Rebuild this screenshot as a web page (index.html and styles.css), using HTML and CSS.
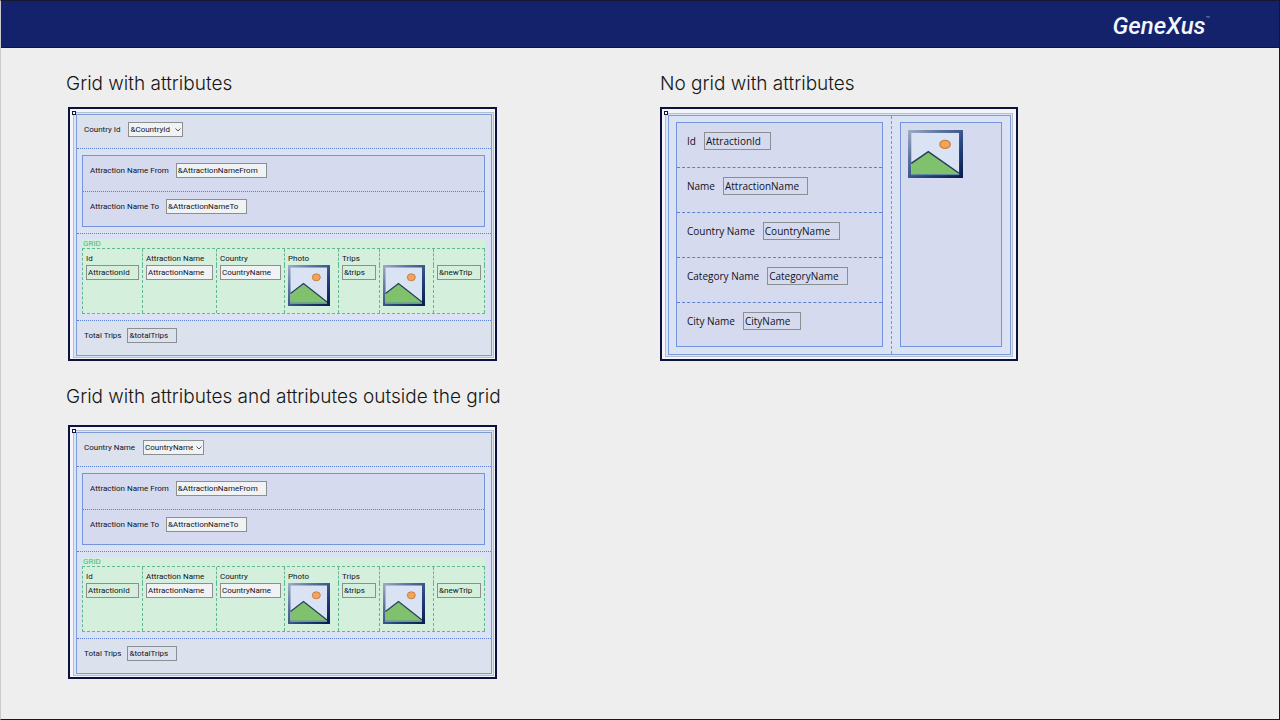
FILE: index.html
```html
<!DOCTYPE html>
<html lang="en">
<head>
<meta charset="utf-8">
<title>GeneXus grids</title>
<link rel="stylesheet" href="styles.css">
</head>
<body>
<svg class="defs" width="0" height="0" aria-hidden="true">
  <defs>
    <linearGradient id="frame" x1="0" y1="0" x2="1" y2="1">
      <stop offset="0" stop-color="#a3aec6"/>
      <stop offset=".3" stop-color="#5b739f"/>
      <stop offset=".65" stop-color="#24427c"/>
      <stop offset="1" stop-color="#081a4c"/>
    </linearGradient>
    <symbol id="photo" viewBox="0 0 42 41" preserveAspectRatio="none">
      <rect width="42" height="41" fill="url(#frame)"/>
      <rect x="2.5" y="2.5" width="36.500" height="36" fill="#d9e3f4"/>
      <path d="M2.500 28.500 15.500 18.500 39 37v1.500H2.500Z" fill="#80c16e"/>
      <path d="M2.500 28.500 15.500 18.500 39 37" fill="none" stroke="#263f5c" stroke-width="1.200"/>
      <path d="M2.500 38H39" stroke="#5d8c9c"/>
      <ellipse cx="28.300" cy="12.300" rx="4" ry="3.500" fill="#f3a45c" stroke="#c9813f"/>
    </symbol>
    <symbol id="chevron" viewBox="0 0 6 4">
      <path d="M.5.5 3 3 5.500.5" fill="none" stroke="#555"/>
    </symbol>
  </defs>
</svg>

<header class="topbar">
  <div class="logo">GeneXus<span class="tm">™</span></div>
</header>

<main class="board">
  <div class="column">
    <section class="sample">
      <h2 class="title">Grid with attributes</h2>
      <div class="panel">
        <span class="handle"></span>
        <div class="frame"><div class="canvas">
          <div class="row row-first">
            <label for="country-id">Country Id</label>
            <span class="combo combo-id"><select id="country-id"><option>&amp;CountryId</option></select><svg class="chevron"><use href="#chevron"/></svg></span>
          </div>
          <div class="row row-group">
            <div class="group">
              <div class="row filter"><label for="from-1">Attraction Name From</label><input class="field light w-91" id="from-1" value="&amp;AttractionNameFrom"></div>
              <div class="row filter"><label for="to-1">Attraction Name To</label><input class="field light w-81" id="to-1" value="&amp;AttractionNameTo"></div>
            </div>
          </div>
          <div class="row row-grid">
            <div class="grid-box">
              <div class="grid-label">GRID</div>
              <table class="grid">
                <colgroup><col class="c-id"><col class="c-name"><col class="c-country"><col class="c-photo"><col class="c-trips"><col class="c-photo"><col></colgroup>
                <thead><tr><th>Id</th><th>Attraction Name</th><th>Country</th><th>Photo</th><th>Trips</th><th></th><th></th></tr></thead>
                <tbody><tr>
                  <td><input class="field" aria-label="Id" value="AttractionId"></td>
                  <td><input class="field light" aria-label="Attraction Name" value="AttractionName"></td>
                  <td><input class="field light" aria-label="Country" value="CountryName"></td>
                  <td><svg class="photo"><use href="#photo"/></svg></td>
                  <td><input class="field" aria-label="Trips" value="&amp;trips"></td>
                  <td><svg class="photo"><use href="#photo"/></svg></td>
                  <td><input class="field" aria-label="New trip" value="&amp;newTrip"></td>
                </tr></tbody>
              </table>
            </div>
          </div>
          <div class="row row-last"><label for="total-1">Total Trips</label><input class="field w-50" id="total-1" value="&amp;totalTrips"></div>
        </div></div>
      </div>
    </section>

    <section class="sample sample-outside">
      <h2 class="title">Grid with attributes and attributes outside the grid</h2>
      <div class="panel">
        <span class="handle"></span>
        <div class="frame"><div class="canvas">
          <div class="row row-first">
            <label for="country-name">Country Name</label>
            <span class="combo combo-name"><select id="country-name"><option>CountryName</option></select><svg class="chevron"><use href="#chevron"/></svg></span>
          </div>
          <div class="row row-group">
            <div class="group">
              <div class="row filter"><label for="from-2">Attraction Name From</label><input class="field light w-91" id="from-2" value="&amp;AttractionNameFrom"></div>
              <div class="row filter"><label for="to-2">Attraction Name To</label><input class="field light w-81" id="to-2" value="&amp;AttractionNameTo"></div>
            </div>
          </div>
          <div class="row row-grid">
            <div class="grid-box">
              <div class="grid-label">GRID</div>
              <table class="grid">
                <colgroup><col class="c-id"><col class="c-name"><col class="c-country"><col class="c-photo"><col class="c-trips"><col class="c-photo"><col></colgroup>
                <thead><tr><th>Id</th><th>Attraction Name</th><th>Country</th><th>Photo</th><th>Trips</th><th></th><th></th></tr></thead>
                <tbody><tr>
                  <td><input class="field" aria-label="Id" value="AttractionId"></td>
                  <td><input class="field light" aria-label="Attraction Name" value="AttractionName"></td>
                  <td><input class="field light" aria-label="Country" value="CountryName"></td>
                  <td><svg class="photo"><use href="#photo"/></svg></td>
                  <td><input class="field" aria-label="Trips" value="&amp;trips"></td>
                  <td><svg class="photo"><use href="#photo"/></svg></td>
                  <td><input class="field" aria-label="New trip" value="&amp;newTrip"></td>
                </tr></tbody>
              </table>
            </div>
          </div>
          <div class="row row-last"><label for="total-2">Total Trips</label><input class="field w-50" id="total-2" value="&amp;totalTrips"></div>
        </div></div>
      </div>
    </section>
  </div>

  <div class="column">
    <section class="sample">
      <h2 class="title">No grid with attributes</h2>
      <div class="panel panel-form">
        <span class="handle"></span>
        <div class="frame"><div class="canvas split">
          <div class="pane pane-fields">
            <div class="group">
              <div class="row item"><label for="f-id">Id</label><input class="field w-67" id="f-id" value="AttractionId"></div>
              <div class="row item"><label for="f-name">Name</label><input class="field w-85" id="f-name" value="AttractionName"></div>
              <div class="row item"><label for="f-country">Country Name</label><input class="field w-77" id="f-country" value="CountryName"></div>
              <div class="row item"><label for="f-category">Category Name</label><input class="field w-81" id="f-category" value="CategoryName"></div>
              <div class="row item"><label for="f-city">City Name</label><input class="field w-58" id="f-city" value="CityName"></div>
            </div>
          </div>
          <div class="pane pane-photo">
            <div class="group"><svg class="photo photo-large"><use href="#photo"/></svg></div>
          </div>
        </div></div>
      </div>
    </section>
  </div>
</main>
</body>
</html>
```
FILE: styles.css
```css
* { box-sizing: border-box; }

body {
  margin: 0;
  min-height: 100vh;
  background: #eeeeee;
  border: 1px solid #15182c;
  border-left-color: #c9cad0;
  font-family: Roboto, "Noto Sans", sans-serif;
  font-size: 8px;
  line-height: 12px;
  color: #10121e;
}

.defs { position: absolute; }

.topbar {
  display: flex;
  justify-content: flex-end;
  align-items: center;
  height: 47px;
  padding: 4px 69px 0 0;
  background: #13226a;
  border-bottom: 1px solid #0b1548;
}

.logo {
  display: flex;
  align-items: flex-start;
  font: italic 500 24px/28px Roboto, sans-serif;
  color: #f1f6ff;
}

.tm { font: 7px/14px Roboto, sans-serif; color: #a9b4dc; }

.board {
  display: grid;
  grid-template-columns: 594fr 554fr;
  padding: 23px 65px 0;
}

.column {
  display: flex;
  flex-direction: column;
  gap: 23px;
}

.title {
  margin: 0 0 10px;
  font: 300 19px/26px Inter, sans-serif;
  color: #161616;
}

.sample-outside .title { margin-bottom: 15px; }

.panel {
  position: relative;
  max-width: 429px;
  margin-left: 2px;
  padding: 3px 1px 1px 3px;
  border: 2px solid #0c1140;
  background: #f3f5f9;
}

.handle {
  position: absolute;
  top: 2px;
  left: 2px;
  width: 4px;
  height: 4px;
  border: 1px solid #14162a;
  background: #fff;
}

.frame {
  padding: 1px 1px 1px 2px;
  border: 1px solid #b3bfcf;
  background: #dbe5f3;
}

.canvas {
  border: 1px solid #7c9bdb;
  background: #dbe2f3;
}

.row {
  display: flex;
  align-items: flex-start;
  gap: 8px;
}

.canvas > .row + .row, .group > .row + .row { border-top: 1px dotted #5c80d4; }

.row-first, .row-last { background: #dbe2ed; padding: 7px; }
.row-first { height: 33px; }
.row-last { height: 35px; gap: 6px; }
.row-group { padding: 6px 6px 6px 5px; }
.row-grid { padding: 5px 6px 6px 5px; }
.row label { line-height: 15px; white-space: nowrap; }

.group {
  flex: 1;
  border: 1px solid #7495de;
  background: #d6daee;
}

.filter { padding: 7px; height: 35px; gap: 7px; }

.field, .combo select {
  height: 15px;
  margin: 0;
  padding: 0 1px;
  border: 1px solid #8a9091;
  border-radius: 0;
  background: transparent;
  font: inherit;
  color: inherit;
}

.light, .combo select { background: #f1f2f4; }

.combo { position: relative; display: flex; }
.combo select { appearance: none; width: 100%; padding: 0 10px 0 1px; }
.combo-id { width: 55px; }
.combo-name { width: 61px; }
.chevron { position: absolute; right: 2px; top: 6px; width: 6px; height: 4px; }

.w-50 { width: 50px; }
.w-58 { width: 58px; }
.w-67 { width: 67px; }
.w-77 { width: 77px; }
.w-81 { width: 81px; }
.w-85 { width: 85px; }
.w-91 { width: 91px; }

.grid-box { flex: 1; background: #d4f0dc; }
.grid-label { padding-left: 1px; line-height: 9px; color: #4cb582; }

.grid {
  width: 100%;
  table-layout: fixed;
  border-spacing: 0;
  border: 1px dashed #5fb891;
  border-right: 0;
}

.c-id { width: 60px; }
.c-name { width: 74px; }
.c-country { width: 68px; }
.c-photo { width: 54px; }
.c-trips { width: 41px; }

.grid th, .grid td {
  padding: 0 3px;
  border-right: 1px dashed #5fb891;
  text-align: left;
  vertical-align: top;
  font-weight: 400;
}

.grid th { height: 16px; padding-top: 4px; white-space: nowrap; }
.grid td { height: 48px; }
.grid .field { display: block; width: 100%; }

.photo { display: block; width: 42px; height: 41px; }

.panel-form {
  max-width: 358px;
  margin-left: 0;
  padding: 4px 3px 2px;
  font-family: "Open Sans", "Noto Sans", sans-serif;
  font-size: 10px;
}

.panel-form .group > .row + .row { border-top-style: dashed; }

.split { display: flex; }
.pane { display: flex; padding: 6px 8px 7px; }
.pane-fields { flex: 2; padding-left: 7px; border-right: 1px dashed #7495de; }
.pane-photo { width: 118px; }
.pane-photo .group { padding: 7px; }
.item { height: 45px; padding: 9px 10px; gap: 8px; }
.group > .item:first-child, .group > .item:last-child { height: 44px; }
.item label { line-height: 18px; }
.item .field { height: 18px; }
.photo-large { width: 55px; height: 48px; }
```
